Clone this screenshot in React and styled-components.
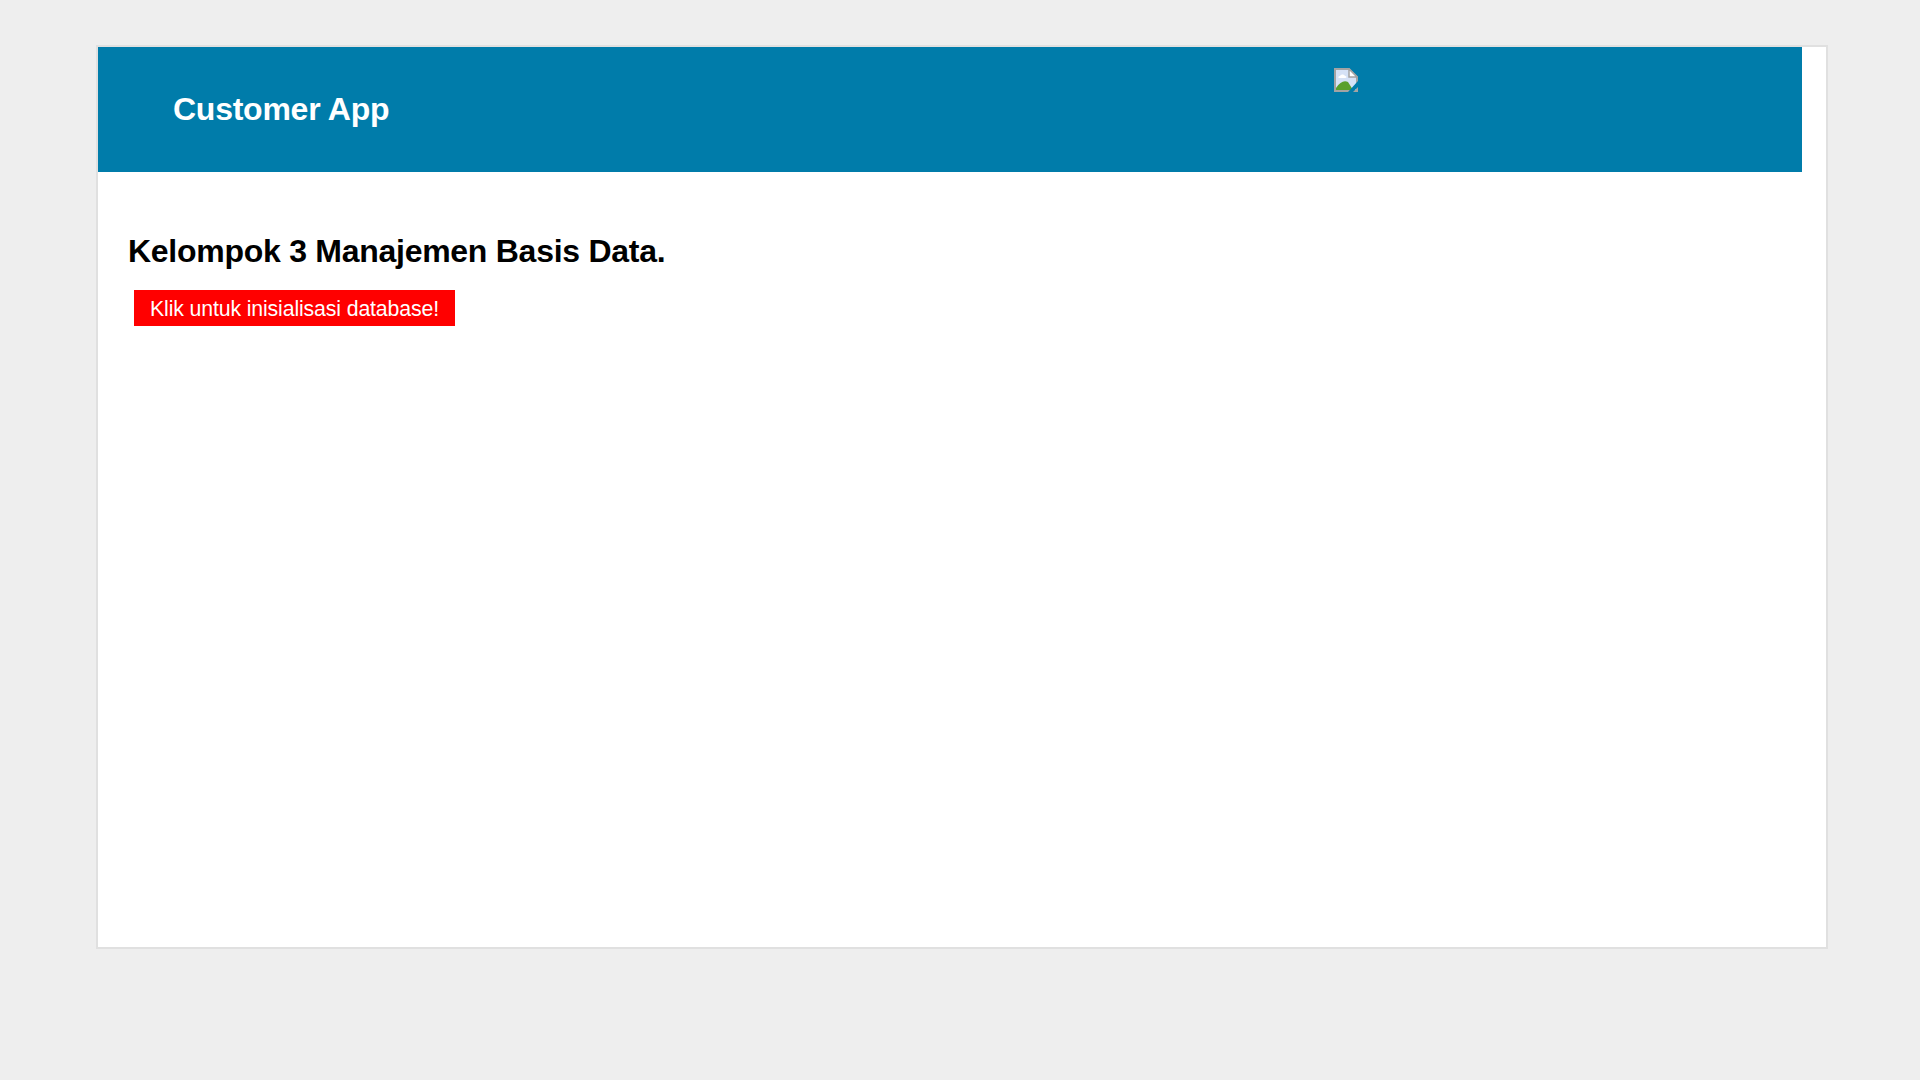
import styled, { createGlobalStyle } from "styled-components"

const GlobalStyle = createGlobalStyle`
  html, body {
    margin: 0;
    padding: 0;
    background-color: #eeeeee;
    font-family: "Liberation Sans", Arial, sans-serif;
  }
`

const Page = styled.div`
  min-height: 1080px;
  padding-top: 45px;
  box-sizing: border-box;
`

const Container = styled.div`
  width: 1728px;
  height: 900px;
  margin-left: 96px;
  background-color: white;
  border: 2px solid #e0e0e0;
  box-sizing: content-box;
`

const Header = styled.div`
  width: 1704px;
  height: 125px;
  background-color: #007caa;
  color: white;
  display: flex;
  align-items: center;
  position: relative;
`

const Title = styled.h1`
  margin: 0 0 0 75px;
  font-size: 32px;
  font-weight: bold;
  letter-spacing: -0.25px;
`

const BrokenImage = styled.svg`
  position: absolute;
  left: 1236px;
  top: 21px;
  width: 24px;
  height: 24px;
`

const Main = styled.div`
  padding: 61px 30px 0;
`

const Heading = styled.h2`
  margin: 0 0 20px;
  font-size: 32px;
  font-weight: bold;
  color: black;
  line-height: 37px;
  letter-spacing: -0.27px;
`

const InitButton = styled.a`
  display: inline-block;
  margin-left: 6px;
  padding: 0 16px;
  height: 36px;
  line-height: 38px;
  background-color: red;
  color: white;
  font-size: 21.3px;
  letter-spacing: -0.14px;
`

const App = () => {
  return (
    <Page>
      <GlobalStyle />
      <Container>
        <Header>
          <Title>Customer App</Title>
          <BrokenImage viewBox="0 0 24 24">
            <path d="M1 1H15L23 9V23H1Z" fill="#d6e2f6" stroke="#a3a3a3" strokeWidth="2" />
            <path d="M15 1V9H23Z" fill="#ffffff" stroke="#a3a3a3" strokeWidth="1.5" />
            <path d="M6 8C7 6 10 6 11 8C13 8 13 10 11 10H5C4 10 4 8 6 8Z" fill="#ffffff" />
            <path d="M2 22V20C6 14 10 12 14 14L19 22Z" fill="#5aa02c" />
            <path d="M14 24L24 13V19L19 24Z" fill="#007caa" />
          </BrokenImage>
        </Header>
        <Main>
          <Heading>Kelompok 3 Manajemen Basis Data.</Heading>
          <InitButton>Klik untuk inisialisasi database!</InitButton>
        </Main>
      </Container>
    </Page>
  )
}

export default App
